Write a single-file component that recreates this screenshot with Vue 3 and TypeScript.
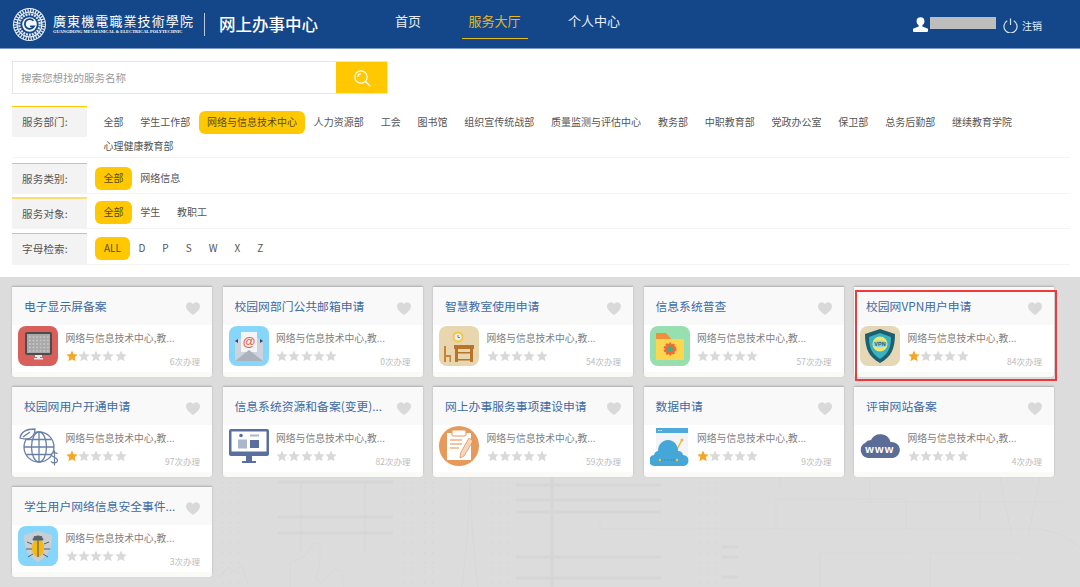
<template>
  <div class="page">
    <header class="top">
      <div class="brand">
        <svg class="logo" viewBox="0 0 36 36">
          <circle cx="18" cy="18" r="17" fill="#e9eef5" />
          <circle cx="18" cy="18" r="14.6" fill="none" stroke="#14478a" stroke-width="2.6" stroke-dasharray="1.5 1.2" />
          <circle cx="18" cy="18" r="12" fill="#14478a" />
          <circle cx="18" cy="18" r="10.5" fill="none" stroke="#dfe6f0" stroke-width="2.4" stroke-dasharray="2 1" />
          <circle cx="18" cy="18" r="7.5" fill="#f3f6fa" />
          <path d="M22 14.2a5 5 0 1 0 .6 5.6h-4" fill="none" stroke="#14478a" stroke-width="1.8" />
        </svg>
        <div class="school">
          <div class="school-cn">廣東機電職業技術學院</div>
          <div class="school-en">GUANGDONG MECHANICAL &amp; ELECTRICAL POLYTECHNIC</div>
        </div>
        <i class="brand-sep"></i>
        <div class="brand-title">网上办事中心</div>
      </div>
      <nav class="nav">
        <a v-for="n in navs" :key="n" class="nav-item" :class="{ on: n === '服务大厅' }">{{ n }}</a>
      </nav>
      <div class="user">
        <svg class="user-ico" viewBox="0 0 16 16">
          <circle cx="8" cy="4.5" r="4.2" fill="#fff" />
          <path d="M6 7h4v3l6 2.500V15a1 1 0 0 1-1 1H1a1 1 0 0 1-1-1v-2.500L6 10z" fill="#fff" />
        </svg>
        <span class="user-name"></span>
        <svg class="power" viewBox="0 0 16 16">
          <path d="M4.500 3a7 7 0 1 0 7 0" fill="none" stroke="#d5deea" stroke-width="1.300" />
          <path d="M8 .5v7" stroke="#d5deea" stroke-width="1.300" />
        </svg>
        <span class="logout">注销</span>
      </div>
    </header>

    <section class="filters">
      <div class="search">
        <div class="search-input">搜索您想找的服务名称</div>
        <button class="search-btn">
          <svg viewBox="0 0 18 18" width="18" height="18">
            <circle cx="8" cy="8" r="6.200" fill="none" stroke="#fff" stroke-width="1.200" />
            <path d="M4.800 8a3.200 3.200 0 0 1 3-3.200M12.500 12.500l4.500 4.500" fill="none" stroke="#fff" stroke-width="1.200" />
          </svg>
        </button>
      </div>

      <div v-for="g in groups" :key="g.label" class="row" :class="g.cls">
        <div class="row-label">{{ g.label }}</div>
        <div class="tags">
          <span v-for="t in g.tags" :key="t" class="tag" :class="{ on: t === g.active }">{{ t }}</span>
        </div>
      </div>
    </section>

    <main class="hall">
      <!-- 底纹 -->
      <svg class="backdrop" viewBox="0 0 1080 310">
        <g fill="none" stroke="#d6d6d6">
          <path stroke-width="3" d="M278 205h115M278 240h115M278 256h115M516 208h145M516 223h145M516 235h145M516 280h145M516 301h145M552 200v110M722 270h16M722 280h16M722 300h16" />
          <path stroke-width="1.500" d="M301 205v70M365 205v70" />
          <path stroke-width="1" stroke="#d8d8d8" d="M220 300l8-10 6 5 8-7 6 20M290 310v-24l14-6 10-14h6v20l-4 16 6 4 12-14 8 2 2 18 18 6M462 310l4-36 2-26 2-48 2 48 2 26 4 36M600 252h440q30 4 50 30l8 28M776 252v-30h130v30M650 252h-50v-8M820 310v-34h90M930 310v-34h90M1000 200l12 60M1040 200l-12 60M860 225h200M980 215v30M780 210v-20M870 200v24" />
        </g>
        <g fill="#d6d6d6">
          <rect v-for="d in dots" :key="d.x + '-' + d.y" :x="d.x" :y="d.y" width="1.500" height="1.500" />
        </g>
      </svg>

      <div class="cards">
        <article v-for="c in cards" :key="c.title" class="card" :class="{ marked: c.marked }">
          <div class="card-head">
            <h3 class="card-title">{{ c.title }}</h3>
            <svg class="heart" viewBox="0 0 14 13">
              <path d="M7 13C2 9.200 0 7 0 4a3.800 3.800 0 0 1 7-2 3.800 3.800 0 0 1 7 2c0 3-2 5.200-7 9z" fill="#d9d9d9" />
            </svg>
          </div>
          <div class="card-body">
            <svg class="icon" viewBox="0 0 40 40">
              <template v-if="c.icon === 'screen'">
                <rect width="40" height="40" rx="8" fill="#d9605a" />
                <rect x="7" y="6" width="27" height="23" rx="2" fill="#4d4d4d" />
                <rect x="9" y="8" width="23" height="19" fill="#a9a9a9" />
                <path d="M11 11h20M11 14.500h20M11 18h20M11 21.500h20M11 25h20" stroke="#c8c8c8" stroke-width="1.600" stroke-dasharray="1.800 1.800" />
                <path d="M17 29h7v2h-2v1h3v1.500h-9V32h3v-1h-2z" fill="#e8e8e8" />
              </template>
              <template v-else-if="c.icon === 'mail'">
                <rect width="40" height="40" rx="8" fill="#86d6fb" />
                <path d="M6 16L20 6l14 10v19H6z" fill="#ccd3dd" />
                <rect x="12" y="6" width="16" height="20" fill="#f4f4f4" />
                <text x="20" y="19.500" text-anchor="middle" font-size="13" font-weight="700" fill="#e8604c" font-family="Liberation Sans, sans-serif">@</text>
                <path d="M6 35l14-11 14 11z" fill="#a9b2bd" />
                <path d="M6 15l3-2v4zM34 15l-3-2v4z" fill="#3f4650" />
              </template>
              <template v-else-if="c.icon === 'class'">
                <rect width="40" height="40" rx="8" fill="#e8d6ae" />
                <circle cx="19" cy="11" r="5.500" fill="#f4c83f" />
                <circle cx="19" cy="11" r="3.500" fill="#e9eef3" />
                <path d="M19 9v2.500h2" fill="none" stroke="#5a6a7a" stroke-width=".8" />
                <path d="M15 19h20v4H15z" fill="#b8742b" />
                <path d="M16 23h3v13h-3zM31 23h3v13h-3zM19 33h12v1.500H19zM19 26h12v1.500H19z" fill="#b8742b" />
                <path d="M5 20h2v9h5v7h-1.500v-5H7v5H5z" fill="#c98235" />
              </template>
              <template v-else-if="c.icon === 'folder'">
                <rect width="40" height="40" rx="8" fill="#97dfaf" />
                <path d="M6 7h10l6 7h12v5H6z" fill="#f28f3b" />
                <path d="M6 13h28v21H6z" fill="#fcd64f" />
                <circle cx="20" cy="23" r="5.500" fill="#ef6a3a" stroke="#ef6a3a" stroke-width="2" stroke-dasharray="2 1.500" />
                <circle cx="20" cy="23" r="2.800" fill="#3fb27f" />
              </template>
              <template v-else-if="c.icon === 'vpn'">
                <rect width="40" height="40" rx="8" fill="#e6d7b6" />
                <path d="M20 3l15 5c0 15-4 23-15 29C9 31 5 23 5 8z" fill="#1e5f70" />
                <path d="M20 7l11 4c0 11-3 17-11 22C12 28 9 22 9 11z" fill="#37b3c2" />
                <circle cx="20" cy="18" r="7.500" fill="#f7e36a" />
                <ellipse cx="20" cy="18" rx="7.500" ry="3.500" fill="#8fd8e4" />
                <text x="20" y="20" text-anchor="middle" font-size="5.500" font-weight="700" fill="#1e5f70" font-family="Liberation Sans, sans-serif">VPN</text>
              </template>
              <template v-else-if="c.icon === 'globe'">
                <g fill="none" stroke="#6a7fa8" stroke-width="1.300">
                  <circle cx="21" cy="21" r="15" />
                  <ellipse cx="21" cy="21" rx="7.500" ry="15" />
                  <path d="M21 6v30M6 21h30M8.500 13.500h25M8.500 28.500h25" />
                  <path d="M2 12C3 6 9 3 17 3c0 5-3 10-9 10-2 0-4-.2-6-1zM5 11l7-5" fill="#fff" />
                  <path d="M39.500 28c-1-2-6-2-6 .8s6 2.200 6 5.500-5 3.200-6.500 1M36.500 24.500v15" fill="#fff" stroke-width="1.200" />
                </g>
              </template>
              <template v-else-if="c.icon === 'monitor'">
                <g transform="translate(0 3)">
                  <rect x="0" y="0" width="40" height="27" rx="2" fill="#596f9e" />
                  <rect x="2.500" y="2.500" width="35" height="20" fill="#fff" />
                  <circle cx="12" cy="6.500" r="1.800" fill="#596f9e" />
                  <rect x="21" y="5.500" width="9" height="2" fill="#a9b6cd" />
                  <rect x="9" y="10.500" width="9" height="9" fill="#a9b6cd" />
                  <rect x="21" y="11" width="9" height="8" fill="#596f9e" />
                  <path d="M17 27h6v5h4v2H13v-2h4z" fill="#596f9e" />
                </g>
              </template>
              <template v-else-if="c.icon === 'clip'">
                <ellipse cx="20" cy="20" rx="20" ry="20" fill="#e5995a" />
                <rect x="8" y="7" width="24" height="27" fill="#fff" />
                <rect x="13" y="4" width="14" height="6" rx="1" fill="#fff" stroke="#e5995a" />
                <path d="M11 14h12M11 18h12M11 22h9" stroke="#eeb184" stroke-width="1.500" />
                <path d="M30 12l4 3-9 15-4 2 .5-5z" fill="#f4d7bd" stroke="#d98647" stroke-width=".7" />
              </template>
              <template v-else-if="c.icon === 'data'">
                <rect x="6" y="2" width="32" height="33" fill="#f2f4f7" />
                <rect x="6" y="2" width="32" height="5" fill="#4eaadb" />
                <path d="M8 4.500h5" stroke="#cfe7f5" stroke-width="1.200" stroke-dasharray="1.500 1" />
                <path d="M25 27l7-13" stroke="#e8b93f" stroke-width="1.500" />
                <circle cx="32" cy="14" r="1.500" fill="#e8b93f" />
                <path d="M5 40a5.500 5.500 0 0 1-1-11 5 5 0 0 1 4-4C8 18 13 14 18 14c6 0 10 5 10 11a5 5 0 0 1 5 4 5.500 5.500 0 0 1 0 11z" fill="#45a6d8" />
                <path d="M11 34h16" stroke="#2f86b9" stroke-width="1" stroke-dasharray="1.500 1.500" />
                <circle cx="10" cy="34" r="1.300" fill="#f0c23a" />
                <circle cx="27" cy="34" r="1.300" fill="#f0c23a" />
              </template>
              <template v-else-if="c.icon === 'www'">
                <path d="M8 33a8 8 0 0 1-3-15 8 8 0 0 1 6-3 10.500 10.500 0 0 1 19.500 2A8 8 0 0 1 33 33z" fill="#5b6d97" transform="translate(0 -1)" />
                <text x="20" y="27" text-anchor="middle" font-size="11" font-weight="700" letter-spacing="1.200" fill="#fff" font-family="Liberation Sans, sans-serif">www</text>
              </template>
              <template v-else-if="c.icon === 'bug'">
                <rect width="40" height="40" rx="8" fill="#86d6fb" />
                <path d="M20 5l14 4c0 13-3 21-14 27C9 30 6 22 6 9z" fill="#c9ced3" />
                <ellipse cx="20" cy="22" rx="6" ry="9" fill="#f6b90f" />
                <path d="M20 13v18" stroke="#55616b" stroke-width="1.200" />
                <path d="M15 14a5 4 0 0 1 10 0zM16 10l2 3M24 10l-2 3M14 18l-5-2M14 23H8M15 28l-5 3M26 18l5-2M26 23h6M25 28l5 3" fill="#55616b" stroke="#55616b" />
              </template>
            </svg>
            <div class="info">
              <p class="desc">网络与信息技术中心,教...</p>
              <div class="meta">
                <div class="stars">
                  <svg v-for="i in 5" :key="i" class="star" viewBox="0 0 12 12">
                    <polygon points="6,0.500 7.700,4.200 11.700,4.600 8.700,7.300 9.600,11.300 6,9.200 2.400,11.300 3.300,7.300 0.300,4.600 4.300,4.200" :fill="i <= c.stars ? '#f5a623' : '#d9d9d9'" />
                  </svg>
                </div>
                <span class="count">{{ c.count }}次办理</span>
              </div>
            </div>
          </div>
          <div class="card-foot"></div>
        </article>
      </div>
    </main>
  </div>
</template>

<script setup lang="ts">
interface Group {
  label: string
  active: string
  tags: string[]
  cls: string
}

interface Card {
  title: string
  icon: string
  stars: number
  count: number
  marked?: boolean
}

const navs = ['首页', '服务大厅', '个人中心']

const groups: Group[] = [
  {
    label: '服务部门:',
    active: '网络与信息技术中心',
    cls: 'row-dept',
    tags: ['全部', '学生工作部', '网络与信息技术中心', '人力资源部', '工会', '图书馆', '组织宣传统战部', '质量监测与评估中心', '教务部', '中职教育部', '党政办公室', '保卫部', '总务后勤部', '继续教育学院', '心理健康教育部'],
  },
  { label: '服务类别:', active: '全部', cls: 'row-type', tags: ['全部', '网络信息'] },
  { label: '服务对象:', active: '全部', cls: 'row-target', tags: ['全部', '学生', '教职工'] },
  { label: '字母检索:', active: 'ALL', cls: 'row-letter', tags: ['ALL', 'D', 'P', 'S', 'W', 'X', 'Z'] },
]

const cards: Card[] = [
  { title: '电子显示屏备案', icon: 'screen', stars: 1, count: 6 },
  { title: '校园网部门公共邮箱申请', icon: 'mail', stars: 0, count: 0 },
  { title: '智慧教室使用申请', icon: 'class', stars: 0, count: 54 },
  { title: '信息系统普查', icon: 'folder', stars: 0, count: 57 },
  { title: '校园网VPN用户申请', icon: 'vpn', stars: 1, count: 84, marked: true },
  { title: '校园网用户开通申请', icon: 'globe', stars: 1, count: 97 },
  { title: '信息系统资源和备案(变更)...', icon: 'monitor', stars: 0, count: 82 },
  { title: '网上办事服务事项建设申请', icon: 'clip', stars: 0, count: 59 },
  { title: '数据申请', icon: 'data', stars: 1, count: 9 },
  { title: '评审网站备案', icon: 'www', stars: 0, count: 4 },
  { title: '学生用户网络信息安全事件...', icon: 'bug', stars: 0, count: 3 },
]

// dotted windows in the building backdrop
const dots: { x: number; y: number }[] = []
for (const col of [222, 230, 238, 404, 412, 424, 432, 492, 500, 508, 700, 708, 716]) {
  for (let y = 205; y < 310; y += 10) dots.push({ x: col, y })
}
</script>

<style>
html,
body {
  margin: 0;
  background: #dcdcdc;
}
</style>

<style scoped>
.page {
  width: 1080px;
  height: 587px;
  overflow: hidden;
  font-family: "Noto Sans CJK SC", "Liberation Sans", sans-serif;
  color: #555;
  background: #fff;
}

.top {
  height: 48px;
  display: flex;
  align-items: center;
  background: #14478a;
  border-bottom: 1px solid #7d9ac0;
  color: #fff;
  padding-left: 12px;
}
.brand {
  display: flex;
  align-items: center;
  width: 349px;
  flex: none;
}
.logo {
  width: 35px;
  height: 35px;
  flex: none;
}
.school {
  margin-left: 6px;
  width: 149px;
  white-space: nowrap;
}
.school-cn {
  font-family: "Noto Sans CJK TC", serif;
  font-size: 13px;
  line-height: 16px;
  letter-spacing: 1.1px;
  font-weight: 400;
}
.school-en {
  font-family: "Liberation Serif", serif;
  font-size: 4.400px;
  line-height: 8px;
  font-weight: 700;
  margin-top: -1px;
}
.brand-sep {
  width: 1px;
  height: 23px;
  margin: 0 14px 0 2px;
  background: #b9c8dc;
}
.brand-title {
  font-size: 16.500px;
  font-weight: 500;
  white-space: nowrap;
}
.nav {
  display: flex;
  align-self: stretch;
  margin-left: 27px;
  width: 525px;
  flex: none;
}
.nav-item {
  font-size: 13px;
  line-height: 41px;
  height: 38px;
  padding: 0 7px;
  margin-right: 33.500px;
  color: #e8eef6;
}
.nav-item.on {
  color: #e6b91e;
  border-bottom: 1px solid #e6b91e;
}
.user {
  display: flex;
  align-items: center;
  margin-top: -1px;
}
.user-ico {
  width: 15px;
  height: 15px;
  margin-top: 2px;
}
.user-name {
  width: 66px;
  height: 12px;
  margin-left: 2px;
  margin-top: -2px;
  background: #bdbdbd;
}
.power {
  width: 15px;
  height: 15px;
  margin: 3px 0 0 7px;
}
.logout {
  margin: 3px 0 0 4px;
  font-size: 10px;
  color: #e8eef6;
}

.filters {
  height: 228px;
  padding: 12px 10px 0 12px;
  box-sizing: border-box;
}
.search {
  width: 376px;
  height: 33px;
  display: flex;
  box-sizing: border-box;
  border: 1px solid #e6e6e6;
}
.search-input {
  flex: 1;
  padding-left: 8px;
  font-size: 10.500px;
  line-height: 31px;
  color: #9a9a9a;
}
.search-btn {
  width: 51px;
  border: 0;
  padding: 0;
  background: #ffc800;
  display: flex;
  align-items: center;
  justify-content: center;
}
.row {
  display: flex;
  border-bottom: 1px solid #f4f4f4;
}
.row-dept {
  margin-top: 12px;
  height: 51px;
}
.row-type {
  margin-top: 5px;
  height: 30px;
}
.row-target {
  margin-top: 3px;
  height: 31px;
}
.row-letter {
  margin-top: 4px;
  height: 31px;
}
.row-label {
  width: 65px;
  height: 30px;
  flex: none;
  padding-left: 10px;
  border-top: 1px solid #ffc800;
  background: #f3f3f3;
  font-size: 10.500px;
  line-height: 30px;
  letter-spacing: 0.2px;
}
.row-target .row-label {
  border-top: 2px solid #ffdb73;
  height: 29px;
}
.tags {
  flex: 1;
  display: flex;
  flex-wrap: wrap;
  align-content: flex-start;
  row-gap: 1px;
  padding: 4px 0 0 8px;
}
.row-dept .tags {
  padding-top: 5px;
}
.tag {
  height: 23px;
  line-height: 22px;
  padding: 0 8.420px;
  font-size: 10px;
  border-radius: 6px;
  color: #555;
  white-space: nowrap;
}
.row-letter .tag {
  padding: 0 8.500px;
}
.row-letter .tag.on {
  padding: 0 9px;
}
.tag.on {
  background: #ffc800;
  color: #5b4a10;
}

.hall {
  position: relative;
  height: 310px;
  background: #dcdcdc;
  overflow: hidden;
}
.backdrop {
  position: absolute;
  left: 0;
  top: 0;
  width: 1080px;
  height: 310px;
}
.cards {
  position: relative;
  display: grid;
  grid-template-columns: repeat(5, 200px);
  column-gap: 10.500px;
  row-gap: 10px;
  padding: 10px 0 0 12px;
}
.card {
  position: relative;
  height: 90px;
  display: flex;
  flex-direction: column;
  background: #fff;
  border-radius: 0 0 4px 4px;
  box-shadow: 0 -1px 2px rgba(0, 0, 0, 0.22);
}
.card.marked::after {
  content: "";
  position: absolute;
  left: 1px;
  top: 3px;
  width: 202px;
  height: 91px;
  border: 2.500px solid #f03a3a;
  box-sizing: border-box;
}
.card-head {
  height: 38px;
  flex: none;
  display: flex;
  align-items: center;
  justify-content: space-between;
  padding: 0 12px;
  background: #f9f9f9;
}
.card-title {
  margin: -2px 0 0;
  font-size: 11.800px;
  font-weight: 400;
  color: #3d6aa5;
  white-space: nowrap;
}
.heart {
  width: 14px;
  height: 13px;
  margin-top: 4px;
  flex: none;
}
.card-body {
  flex: 1;
  display: flex;
  gap: 7.500px;
  padding: 1px 12px 0 6px;
}
.icon {
  width: 40px;
  height: 40px;
  flex: none;
}
.info {
  flex: 1;
}
.desc {
  margin: 0;
  height: 24px;
  font-size: 9.800px;
  line-height: 24px;
  color: #808080;
  white-space: nowrap;
}
.meta {
  display: flex;
  justify-content: space-between;
}
.stars {
  display: flex;
  gap: 0.300px;
}
.star {
  width: 12px;
  height: 12px;
}
.count {
  margin-top: 5px;
  font-size: 8.500px;
  line-height: 12px;
  color: #bbb;
}
.card-foot {
  height: 5px;
  flex: none;
  background: #fafaf6;
  border-radius: 0 0 4px 4px;
}
</style>
